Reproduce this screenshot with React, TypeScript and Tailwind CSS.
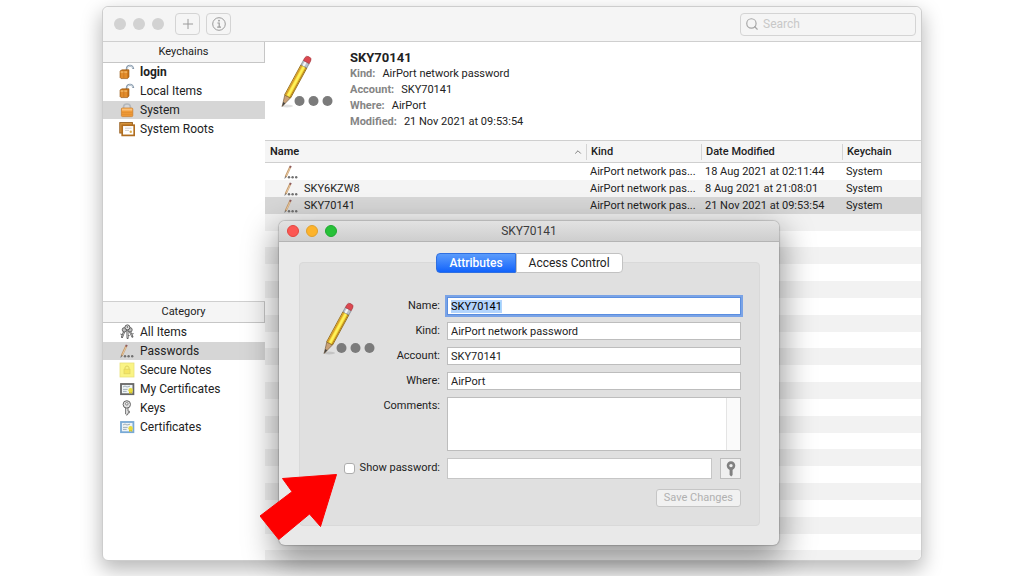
import { useEffect, useRef, useState } from "react";
import type { ReactNode } from "react";
import { ChevronUp, Plus, Search } from "lucide-react";

interface KeychainItem {
    id: number;
    name: string;
    kind: string;
    modified: string;
    keychain: string;
}

interface SidebarEntry {
    label: string;
    icon: ReactNode;
    bold?: boolean;
}

const ITEMS: KeychainItem[] = [
    { id: 1, name: "", kind: "AirPort network pas...", modified: "18 Aug 2021 at 02:11:44", keychain: "System" },
    { id: 2, name: "SKY6KZW8", kind: "AirPort network pas...", modified: "8 Aug 2021 at 21:08:01", keychain: "System" },
    { id: 3, name: "SKY70141", kind: "AirPort network pas...", modified: "21 Nov 2021 at 09:53:54", keychain: "System" },
];

function PencilIcon({ className }: { className: string }) {
    return (
        <svg viewBox="0 0 54 54" className={className} aria-hidden="true">
            <ellipse cx="7" cy="52" rx="6" ry="1.5" fill="#000" opacity="0.12" />
            <g transform="translate(2.2 52.4) rotate(28.5) scale(0.84 0.99)">
                <path d="M-4 -12 L0 0 L4 -12 Z" fill="#c9a177" stroke="#7d6242" strokeWidth="0.7" />
                <path d="M-1.4 -4.4 L0 0 L1.4 -4.4 Z" fill="#444" />
                <path d="M-4 -46 V-12 L-2 -11 L0 -12 L2 -11 L4 -12 V-46 Z" fill="#f7dc38" stroke="#8a6a24" strokeWidth="0.9" />
                <path d="M-3.6 -46 H-2 V-11.6 L-3.6 -12 Z" fill="#d79a2c" />
                <path d="M-1 -46 H1.2 V-12 H-1 Z" fill="#fff25e" />
                <path d="M2.4 -46 H3.6 V-12 H2.4 Z" fill="#b98420" />
                <path d="M-4 -51 H4 V-46 H-4 Z" fill="#b9c0c9" stroke="#70757c" strokeWidth="0.6" />
                <path d="M-2 -51 H0.6 V-46 H-2 Z" fill="#f4f6f8" />
                <path d="M-4 -51 V-54 Q-4 -57 0 -57 Q4 -57 4 -54 V-51 Z" fill="#dc4850" stroke="#9c3a40" strokeWidth="0.6" />
            </g>
            <circle cx="19.5" cy="47" r="5" fill="#7b7b7b" />
            <circle cx="33.5" cy="47" r="5" fill="#7b7b7b" />
            <circle cx="47.5" cy="47" r="5" fill="#7b7b7b" />
        </svg>
    );
}

// Used in list rows, where the detailed pencil would turn to mush
function SmallPencilIcon() {
    return (
        <svg viewBox="0 0 14 14" className="h-3.5 w-3.5 shrink-0" aria-hidden="true">
            <path d="M1.6 12 L6.2 2" stroke="#c39a6c" strokeWidth="2" />
            <path d="M2.4 10.8 L6.4 2.2" stroke="#f0d0a8" strokeWidth="0.8" />
            <path d="M6 2.6 L6.8 0.9" stroke="#8e5a5a" strokeWidth="2" />
            <path d="M0.8 13.4 L1.8 11.4" stroke="#666" strokeWidth="1" />
            <circle cx="5" cy="12.2" r="1.2" fill="#707070" />
            <circle cx="8.6" cy="12.2" r="1.2" fill="#707070" />
            <circle cx="12.2" cy="12.2" r="1.2" fill="#707070" />
        </svg>
    );
}

function UnlockedIcon() {
    return (
        <svg viewBox="0 0 16 16" className="h-4 w-4" aria-hidden="true">
            <path d="M7.6 6.4 V5 Q8 1.6 11 1.6 Q14 1.8 14.4 5" fill="none" stroke="#8496a8" strokeWidth="1.7" />
            <path d="M8 5 Q8.6 2 11 1.8 Q13.4 2 14 4" fill="none" stroke="#e2eaf0" strokeWidth="0.8" />
            <path d="M1 7 L3 5.8 H10 V13 L8.6 14.6 H2 L1 13.6 Z" fill="#c8741a" stroke="#94540f" strokeWidth="0.6" />
            <path d="M1.6 7.2 H8.2 V14 H1.6 Z" fill="#e28c2c" />
            <path d="M1.6 7.2 H8.2 V9 H1.6 Z" fill="#f0ae58" />
            <path d="M4.8 7.2 V14" stroke="#c5751f" strokeWidth="0.7" />
        </svg>
    );
}

function LockedIcon() {
    return (
        <svg viewBox="0 0 16 16" className="h-4 w-4" aria-hidden="true">
            <path d="M4.6 7 V4.6 Q4.8 2 8 2 Q11.2 2 11.4 4.6 V7" fill="none" stroke="#b4b8bc" strokeWidth="1.6" />
            <rect x="2.4" y="6" width="11.4" height="8.6" rx="1" fill="#ef9b38" stroke="#c97a26" strokeWidth="0.7" />
            <path d="M3 6.6 H13.2 V8.6 H3 Z" fill="#fbc078" />
            <path d="M3 10.6 H13.2 M3 12.6 H13.2" stroke="#e08c30" strokeWidth="0.7" />
        </svg>
    );
}

function RootsIcon() {
    return (
        <svg viewBox="0 0 16 16" className="h-4 w-4" aria-hidden="true">
            <rect x="0.8" y="1.6" width="12.6" height="10.4" fill="#dd9b40" stroke="#966022" strokeWidth="1" />
            <rect x="3.2" y="4.2" width="12" height="10.2" fill="#fff" stroke="#b06d20" strokeWidth="1.7" />
            <path d="M6 7.2 H12.6 M6 9.4 H10" stroke="#c4c4c4" strokeWidth="0.8" />
            <circle cx="11.8" cy="10.8" r="1.2" fill="#e0b050" />
        </svg>
    );
}

function AllKeysIcon() {
    return (
        <svg viewBox="0 0 16 16" className="h-4 w-4" aria-hidden="true">
            <path d="M6 5.6 L3 13 M8.4 6 L8.6 14 M10 5.6 L13.4 12.6" stroke="#565656" strokeWidth="2" strokeLinecap="round" />
            <path d="M6 6 L3.2 12.8 M8.4 6 L8.6 13.8 M10.2 6 L13.2 12.4" stroke="#c4c4c4" strokeWidth="0.8" />
            <circle cx="5.4" cy="5.8" r="2.2" fill="#bbb" stroke="#5c5c5c" strokeWidth="0.9" />
            <circle cx="11" cy="5.8" r="2.2" fill="#bbb" stroke="#5c5c5c" strokeWidth="0.9" />
            <circle cx="8.4" cy="3.4" r="2.5" fill="#ddd" stroke="#5c5c5c" strokeWidth="1" />
            <circle cx="8.4" cy="3" r="0.8" fill="#555" />
            <path d="M3 10.6 L1.4 10 M13 10 L14.6 9.6 M9 11.6 H10.6" stroke="#666" strokeWidth="1" />
        </svg>
    );
}

function SingleKeyIcon() {
    return (
        <svg viewBox="0 0 16 16" className="h-4 w-4" aria-hidden="true">
            <path d="M6.6 7 V14 L7.8 15.2 L9 14.2 V12.8 H10.4 V11.2 H9 V7 Z" fill="#e4e4e4" stroke="#666" strokeWidth="0.9" />
            <circle cx="7.8" cy="4.4" r="3.7" fill="#e2e2e2" stroke="#666" strokeWidth="1" />
            <circle cx="7.8" cy="3.8" r="1.3" fill="#fff" stroke="#777" strokeWidth="0.9" />
        </svg>
    );
}

function NoteIcon() {
    return (
        <svg viewBox="0 0 16 16" className="h-4 w-4" aria-hidden="true">
            <rect x="1" y="1" width="14" height="14" fill="#faf484" stroke="#e9e07a" strokeWidth="0.8" />
            <path d="M6 7.4 V5.8 Q6.2 4 8 4 Q9.8 4 10 5.8 V7.4" fill="none" stroke="#ddd060" strokeWidth="1" />
            <rect x="5" y="7.2" width="6" height="4.6" fill="#f5e664" stroke="#ddd060" strokeWidth="0.7" />
        </svg>
    );
}

function CertificateIcon({ frame }: { frame: string }) {
    return (
        <svg viewBox="0 0 16 16" className="h-4 w-4" aria-hidden="true">
            <rect x="2" y="3" width="12.4" height="10.2" fill="#eef3f5" stroke={frame} strokeWidth="1.8" />
            <path d="M4 6 L6 5 L8 6 L11 5.2 M4 8.4 H8.6 M4 10.4 H7.6" fill="none" stroke="#80909c" strokeWidth="0.7" />
            <path d="M10 9 H13.2 V13 L11.6 12 L10 13 Z" fill="#cfbf22" />
            <circle cx="11.6" cy="9.2" r="2.2" fill="#e8db3c" />
        </svg>
    );
}

const KEYCHAINS: SidebarEntry[] = [
    { label: "login", icon: <UnlockedIcon />, bold: true },
    { label: "Local Items", icon: <UnlockedIcon /> },
    { label: "System", icon: <LockedIcon /> },
    { label: "System Roots", icon: <RootsIcon /> },
];

const CATEGORIES: SidebarEntry[] = [
    { label: "All Items", icon: <AllKeysIcon /> },
    { label: "Passwords", icon: <SmallPencilIcon /> },
    { label: "Secure Notes", icon: <NoteIcon /> },
    { label: "My Certificates", icon: <CertificateIcon frame="#666" /> },
    { label: "Keys", icon: <SingleKeyIcon /> },
    { label: "Certificates", icon: <CertificateIcon frame="#78a9d6" /> },
];

function SidebarSection({ title, entries, initial }: { title: string; entries: SidebarEntry[]; initial: string }) {
    const [selected, setSelected] = useState(initial);

    return (
        <section>
            <h2 className="h-[21px] border-r border-b border-[#c6c6c6] bg-[#f5f5f5] text-center text-[11px] leading-5">{title}</h2>
            <ul className="flex flex-col gap-px">
                {entries.map(entry => (
                    <li key={entry.label}>
                        <button
                            type="button"
                            onClick={() => setSelected(entry.label)}
                            className={`flex h-[18px] w-full items-center gap-[5px] pl-4 text-xs ${entry.label === selected ? "bg-[#d6d6d6]" : ""} ${entry.bold ? "font-bold" : ""}`}
                        >
                            <span className="flex w-4 justify-center">{entry.icon}</span>
                            {entry.label}
                        </button>
                    </li>
                ))}
            </ul>
        </section>
    );
}

function Toolbar() {
    return (
        <header className="flex h-[35px] shrink-0 items-center rounded-t-md border-b border-[#cfcfcf] bg-[#f5f5f5] pr-[5px] pl-[11px]">
            <div className="flex gap-[7px]">
                <span className="h-3 w-3 rounded-full bg-[#d2d2d2]" />
                <span className="h-3 w-3 rounded-full bg-[#d2d2d2]" />
                <span className="h-3 w-3 rounded-full bg-[#d2d2d2]" />
            </div>
            <div className="ml-[11px] flex gap-1.5">
                <button type="button" aria-label="Add" className="flex h-[22px] w-[25px] items-center justify-center rounded border border-[#d4d4d4] text-[#9a9a9a]">
                    <Plus size={16} strokeWidth={1.5} />
                </button>
                <button type="button" aria-label="Info" className="flex h-[22px] w-[25px] items-center justify-center rounded border border-[#d4d4d4] text-[#9a9a9a]">
                    <svg viewBox="0 0 14 14" className="h-3.5 w-3.5" fill="none" stroke="currentColor" aria-hidden="true">
                        <circle cx="7" cy="7" r="6.3" />
                        <path d="M5.4 6 H7.2 V10 M5.2 10.2 H9" strokeWidth="1.2" />
                        <circle cx="7" cy="3.7" r="0.9" fill="currentColor" stroke="none" />
                    </svg>
                </button>
            </div>
            <label className="ml-auto flex h-[23px] w-[176px] items-center gap-1 rounded border border-[#d4d4d4] pl-1 text-[#a6a6a6]">
                <Search size={14} strokeWidth={2} />
                <input type="search" placeholder="Search" aria-label="Search" className="min-w-0 flex-1 bg-transparent text-xs outline-none placeholder:text-[#c8c8c8]" />
            </label>
        </header>
    );
}

function DetailLine({ label, value }: { label: string; value: string }) {
    return (
        <div className="flex gap-[7px]">
            <dt className="font-bold text-[#858585]">{label}</dt>
            <dd>{value}</dd>
        </div>
    );
}

function ItemTable() {
    return (
        <table className="w-full table-fixed border-collapse text-left text-[11px]">
            <colgroup>
                <col />
                <col className="w-[115px]" />
                <col className="w-[141px]" />
                <col className="w-[78px]" />
            </colgroup>
            <thead className="bg-[#f5f5f5] shadow-[inset_0_-1px_0_#cfcfcf]">
                <tr className="h-[22px]">
                    <th className="p-0 pl-[5px] font-semibold">
                        <div className="flex h-4 items-center justify-between border-r border-[#d4d4d4] pr-[3px]">
                            Name
                            <ChevronUp size={10} className="text-[#666]" />
                        </div>
                    </th>
                    <th className="p-0 font-medium">
                        <div className="h-4 border-r border-[#d4d4d4] pl-1 leading-4">Kind</div>
                    </th>
                    <th className="p-0 font-medium">
                        <div className="h-4 border-r border-[#d4d4d4] pl-1 leading-4">Date Modified</div>
                    </th>
                    <th className="p-0 pl-1 font-medium">Keychain</th>
                </tr>
            </thead>
            <tbody>
                {ITEMS.map(item => (
                    <tr key={item.id} className="h-[17px] leading-4 even:bg-[#f4f4f4] last:bg-[#d6d6d6]">
                        <td className="p-0 pl-[19px]">
                            <div className="flex h-4 items-center gap-[6px]">
                                <SmallPencilIcon />
                                {item.name}
                            </div>
                        </td>
                        <td className="p-0 pl-[3px] whitespace-nowrap">{item.kind}</td>
                        <td className="p-0 pl-[3px] whitespace-nowrap">{item.modified}</td>
                        <td className="p-0 pl-[3px]">{item.keychain}</td>
                    </tr>
                ))}
            </tbody>
        </table>
    );
}

function Field({ id, label, value }: { id: string; label: string; value: string }) {
    const ref = useRef<HTMLInputElement>(null);

    // The name is ready to be overwritten when the dialog opens
    useEffect(() => {
        if (id === "name") {
            ref.current?.focus();
            ref.current?.select();
        }
    }, [id]);

    return (
        <>
            <label htmlFor={id} className="text-right leading-[18px]">{label}</label>
            <input
                ref={ref}
                id={id}
                type="text"
                defaultValue={value}
                className="h-[18px] w-full min-w-0 border border-[#bdbdbd] bg-white px-[3px] outline-none selection:bg-[#b3d4fc] selection:text-black focus:border-[#5a8ee0] focus:ring-2 focus:ring-[#7aa3e6]"
            />
        </>
    );
}

function AttributesDialog() {
    const [tab, setTab] = useState("Attributes");

    return (
        <div
            role="dialog"
            aria-label="SKY70141"
            className="absolute top-[214px] left-44 w-[500px] rounded-md bg-[#e9e9e9] pb-[19px] shadow-[0_0_1px_1px_rgba(0,0,0,0.16),0_12px_32px_4px_rgba(0,0,0,0.4)]"
        >
            <div className="flex h-[21px] items-center rounded-t-md border-b border-[#b4b4b4] bg-linear-to-b from-[#e2e2e2] to-[#cecece] px-2">
                <div className="flex flex-1 gap-[7px]">
                    <button type="button" aria-label="Close" className="h-3 w-3 rounded-full border border-[#e2463f] bg-[#fc5753]" />
                    <button type="button" aria-label="Minimise" className="h-3 w-3 rounded-full border border-[#e0a02c] bg-[#fdb32b]" />
                    <button type="button" aria-label="Zoom" className="h-3 w-3 rounded-full border border-[#1fa930] bg-[#27c138]" />
                </div>
                <h1 className="text-xs text-[#3c3c3c]">SKY70141</h1>
                <div className="flex-1" />
            </div>

            <div className="mt-5 mr-[19px] ml-5 rounded border border-[#d9d9d9] bg-[#e0e0e0] pb-[18px]">
                <div className="-mt-2.5 flex justify-center text-xs">
                    {["Attributes", "Access Control"].map(name => (
                        <button
                            key={name}
                            type="button"
                            onClick={() => setTab(name)}
                            className={`h-5 border px-3 first:rounded-l last:rounded-r ${name === tab ? "border-[#2f6fe0] bg-linear-to-b from-[#5a9bfb] to-[#0f62fb] font-medium text-white" : "border-[#c2c2c2] bg-white"}`}
                        >
                            {name}
                        </button>
                    ))}
                </div>

                <form className="mt-6 grid grid-cols-[54px_57px_1fr] gap-x-[7px] gap-y-[7px] pr-[18px] pl-[22px] text-[11px]" onSubmit={e => e.preventDefault()}>
                    <div className="row-span-5 pt-1">
                        <PencilIcon className="h-[54px] w-[54px]" />
                    </div>
                    <Field id="name" label="Name:" value="SKY70141" />
                    <Field id="kind" label="Kind:" value="AirPort network password" />
                    <Field id="account" label="Account:" value="SKY70141" />
                    <Field id="where" label="Where:" value="AirPort" />

                    <label htmlFor="comments" className="text-right leading-[18px]">Comments:</label>
                    <div className="flex h-[54px] border border-[#bdbdbd] bg-white">
                        <textarea id="comments" className="min-w-0 flex-1 resize-none px-[3px] outline-none" />
                        <div className="w-3.5 border-l border-[#e4e4e4] bg-[#fafafa]" />
                    </div>

                    <label className="col-span-2 flex items-center justify-end gap-[5px]">
                        <input type="checkbox" className="h-[11px] w-[11px] appearance-none rounded-[3px] border border-[#adadad] bg-white checked:bg-[#0f62fb]" />
                        Show password:
                    </label>
                    <div className="flex gap-2">
                        <input type="text" aria-label="Password" className="h-[21px] min-w-0 flex-1 border border-[#c6c6c6] bg-white px-[3px] outline-none" />
                        <button type="button" aria-label="Password assistant" className="flex h-[21px] w-[21px] items-center justify-center border border-[#bdbdbd] bg-[#efefef]">
                            <svg viewBox="0 0 10 16" className="h-4 w-2.5" aria-hidden="true">
                                <circle cx="5" cy="4.6" r="3" fill="none" stroke="#808080" strokeWidth="2.6" />
                                <path d="M3.6 8 H6.6 V14 L5.2 15.4 L3.6 14 Z" fill="#808080" />
                            </svg>
                        </button>
                    </div>

                    <button type="submit" disabled className="col-span-3 mt-[3px] h-[18px] justify-self-end rounded-[3px] border border-[#c6c6c6] bg-[#f1f1f1] px-[7px] text-[#b0b0b0]">
                        Save Changes
                    </button>
                </form>
            </div>
        </div>
    );
}

export default function App() {
    return (
        <div className="h-screen overflow-hidden bg-white px-[102px] pt-1.5 pb-[15px] font-[Roboto,'Liberation_Sans',sans-serif] text-[#222]">
            <div className="relative flex h-full flex-col rounded-md border border-[#cdcdcd] bg-white shadow-[0_8px_20px_1px_rgba(0,0,0,0.28)]">
                <Toolbar />
                <div className="flex min-h-0 flex-1">
                    <aside className="grid w-[162px] shrink-0 grid-rows-[259px_1fr]">
                        <SidebarSection title="Keychains" entries={KEYCHAINS} initial="System" />
                        <div className="border-t border-[#cfcfcf]">
                            <SidebarSection title="Category" entries={CATEGORIES} initial="Passwords" />
                        </div>
                    </aside>

                    <main className="flex min-w-0 flex-1 flex-col">
                        <div className="flex h-[99px] shrink-0 gap-4 border-b border-[#cfcfcf] pt-2 pl-[15px]">
                            <PencilIcon className="mt-1 h-[54px] w-[54px]" />
                            <div>
                                <h1 className="text-[13px] leading-4 font-bold">SKY70141</h1>
                                <dl className="text-[11px] leading-4">
                                    <DetailLine label="Kind:" value="AirPort network password" />
                                    <DetailLine label="Account:" value="SKY70141" />
                                    <DetailLine label="Where:" value="AirPort" />
                                    <DetailLine label="Modified:" value="21 Nov 2021 at 09:53:54" />
                                </dl>
                            </div>
                        </div>
                        <ItemTable />
                        {/* empty rows keep the zebra pattern going down to the window edge */}
                        <div className="flex-1 rounded-br-md bg-[repeating-linear-gradient(#f2f2f2_0_17px,#fff_17px_33px,#f2f2f2_33px_50px,#fff_50px_67px,#f2f2f2_67px_84px,#fff_84px_101px)]" />
                    </main>
                </div>

                <AttributesDialog />

                <svg viewBox="0 0 78 66" className="absolute top-[467px] left-[157px] h-[66px] w-[78px]" aria-hidden="true">
                    <path d="M76.5 0.5 L22.5 4.5 L32 17.7 L0 42 L18.8 65.5 L49.5 40 L60.5 52.5 Z" fill="#fe0000" stroke="#fe0000" strokeLinejoin="round" />
                </svg>
            </div>
        </div>
    );
}
